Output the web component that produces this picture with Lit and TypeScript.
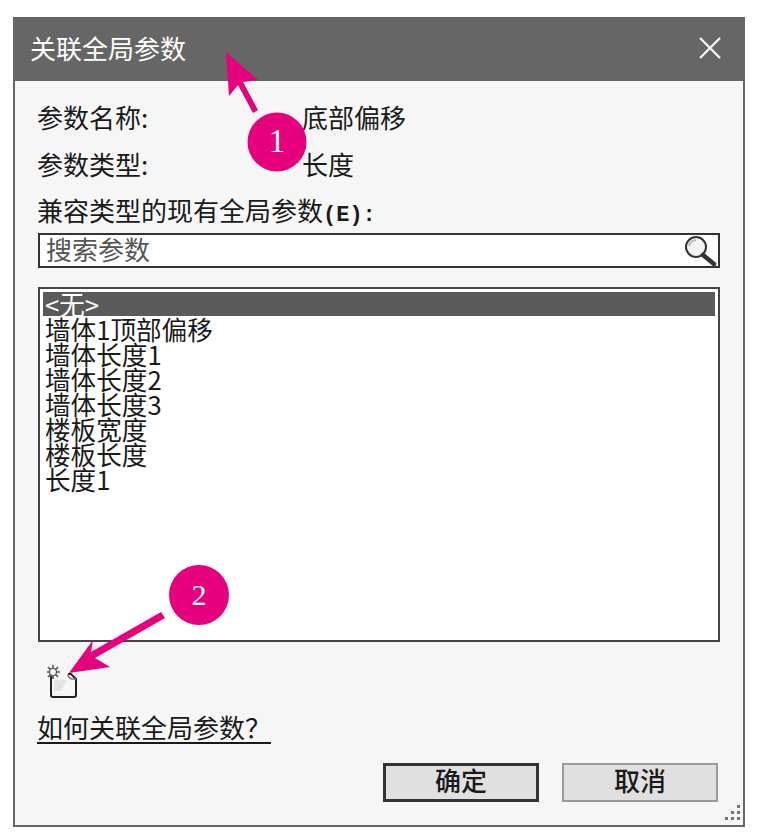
import { LitElement, html, css, svg } from "lit";
import { customElement } from "lit/decorators.js";

const ITEMS = ["墙体1顶部偏移", "墙体长度1", "墙体长度2", "墙体长度3", "楼板宽度", "楼板长度", "长度1"];

@customElement("app-root")
export class AppRoot extends LitElement {
  static styles = css`
    :host {
      display: block;
      position: relative;
      width: 761px;
      height: 836px;
      background: #fff;
      overflow: hidden;
      font-family: "Noto Sans CJK SC", "Liberation Sans", sans-serif;
      color: #1a1a1a;
      box-sizing: border-box;
      padding: 17px 0 0 13px;
    }
    * { box-sizing: border-box; }
    .dialog {
      width: 732px;
      height: 810px;
      border: 2px solid #666;
      background: #f6f6f6;
      display: flex;
      flex-direction: column;
    }
    .titlebar {
      height: 64px;
      margin: -2px -2px 0;
      padding: 0 23px 0 17px;
      background: #666;
      color: #fff;
      display: flex;
      align-items: center;
      justify-content: space-between;
      font-size: 26px;
      flex: none;
    }
    .title { margin-top: -3px; }
    .close { display: block; margin-top: -3px; }
    .body {
      flex: 1;
      display: flex;
      flex-direction: column;
      padding: 0 23px 0 22px;
      font-size: 26px;
    }
    .row {
      display: flex;
      height: 47px;
      align-items: center;
      line-height: 1;
    }
    .row.first { margin-top: 12px; }
    .label { width: 265px; }
    .compat { height: 30px; margin-top: 9px; line-height: 28px; }
    .lat { font-family: "Liberation Mono", monospace; font-size: 22px; font-weight: 700; }
    .search {
      margin: 7px 0 0 1px;
      height: 35px;
      border: 2px solid #333;
      background: #fff;
      display: flex;
      align-items: center;
      justify-content: space-between;
      padding: 0 1px 0 6px;
      color: #555;
      flex: none;
    }
    .search span { margin-top: -4px; }
    .list {
      margin: 19px 0 0 1px;
      height: 355px;
      border: 2px solid #444;
      background: #fff;
      padding: 3px 3px 0 3px;
      font-size: 25.6px;
      flex: none;
    }
    .item { height: 25px; line-height: 23px; padding-left: 2px; white-space: nowrap; }
    .item.sel { height: 24px; background: #5a5a5a; color: #fff; margin-bottom: 1px; }
    .icon { display: block; margin: 22px 0 0 10px; flex: none; }
    .link {
      margin-top: 12px;
      align-self: flex-start;
      height: 36px;
      line-height: 30px;
      font-size: 26px;
      text-decoration: underline;
      text-underline-offset: 4px;
    }
    .buttons {
      display: flex;
      justify-content: flex-end;
      gap: 23px;
      margin: 15px 2px 0 0;
    }
    .btn {
      width: 156px;
      height: 39px;
      background: #e0e0e0;
      display: flex;
      align-items: center;
      justify-content: center;
      font-size: 26px;
      line-height: 30px;
      font-weight: 500;
      padding-bottom: 6px;
      border: 2px solid #999;
    }
    .btn.default { border: 3px solid #333; }
    .grip { position: absolute; left: 723px; top: 803px; display: block; }
    .overlay { position: absolute; left: 0; top: 0; display: block; pointer-events: none; }
    .num { font-family: "Liberation Serif", serif; font-size: 30px; fill: #fff; text-anchor: middle; }
    .num.big { font-size: 33px; }
  `;

  render() {
    return html`
      <div class="dialog">
        <div class="titlebar">
          <span class="title">关联全局参数</span>
          <svg class="close" width="24" height="24" viewBox="0 0 24 24" fill="none" stroke="#f4f4f4" stroke-width="2.4">
            <path d="M2 2 L22 22 M22 2 L2 22" />
          </svg>
        </div>
        <div class="body">
          <div class="row first"><span class="label">参数名称:</span><span>底部偏移</span></div>
          <div class="row"><span class="label">参数类型:</span><span>长度</span></div>
          <div class="compat">兼容类型的现有全局参数<span class="lat">(E):</span></div>
          <div class="search">
            <span>搜索参数</span>
            <svg width="34" height="30" viewBox="0 0 34 30" fill="none">
              <circle cx="13" cy="11" r="10" stroke="#333" stroke-width="2" fill="#f4f4f4" />
              <path d="M6 10 A8 8 0 0 1 13 4" stroke="#bbb" stroke-width="2" />
              <path d="M20 19 L31 28" stroke="#333" stroke-width="4.5" stroke-linecap="round" />
            </svg>
          </div>
          <div class="list">
            <div class="item sel">&lt;无&gt;</div>
            ${ITEMS.map((i) => html`<div class="item">${i}</div>`)}
          </div>
          <svg class="icon" width="32" height="36" viewBox="0 0 32 36" fill="none">
            <path d="M4 12 V31 Q4 33 6 33 H27 Q29 33 29 31 V15 L24 10 H21" stroke="#222" stroke-width="2" />
            <path d="M21 10 Q21 14 25 15 L29 15" stroke="#777" stroke-width="1.5" />
            <path d="M7 16 H20 L14 27 H7 Z" fill="#e4e4e4" />
            <g stroke="#555" stroke-width="1.6">
              <path d="M6 1 V15 M-1 8 H13 M1 3 L11 13 M11 3 L1 13" />
            </g>
            <circle cx="6" cy="8" r="3.5" fill="#f6f6f6" stroke="#555" stroke-width="1.2" />
          </svg>
          <div class="link">如何关联全局参数&#xFF1F;</div>
          <div class="buttons">
            <div class="btn default">确定</div>
            <div class="btn">取消</div>
          </div>
        </div>
      </div>
      <svg class="grip" width="20" height="20" viewBox="0 0 20 20" fill="#777">
        <rect x="14" y="2" width="3" height="3" />
        <rect x="8" y="8" width="3" height="3" /><rect x="14" y="8" width="3" height="3" />
        <rect x="2" y="14" width="3" height="3" /><rect x="8" y="14" width="3" height="3" /><rect x="14" y="14" width="3" height="3" />
      </svg>
      <svg class="overlay" width="761" height="836" viewBox="0 0 761 836">
        ${svg`
          <g fill="#e6007e">
            <path d="M226 52 L258 80 L243 82 L258 110 L253 113 L238 85 L229 96 Z" />
            <circle cx="277" cy="142" r="29.5" />
            <path d="M69 673 L93 640 L91 652 L161 612 L165 618 L95 658 L110 667 Z" />
            <circle cx="199" cy="595" r="30" />
          </g>
          <text class="num big" x="277" y="152">1</text>
          <text class="num" x="199" y="605">2</text>
        `}
      </svg>
    `;
  }
}
